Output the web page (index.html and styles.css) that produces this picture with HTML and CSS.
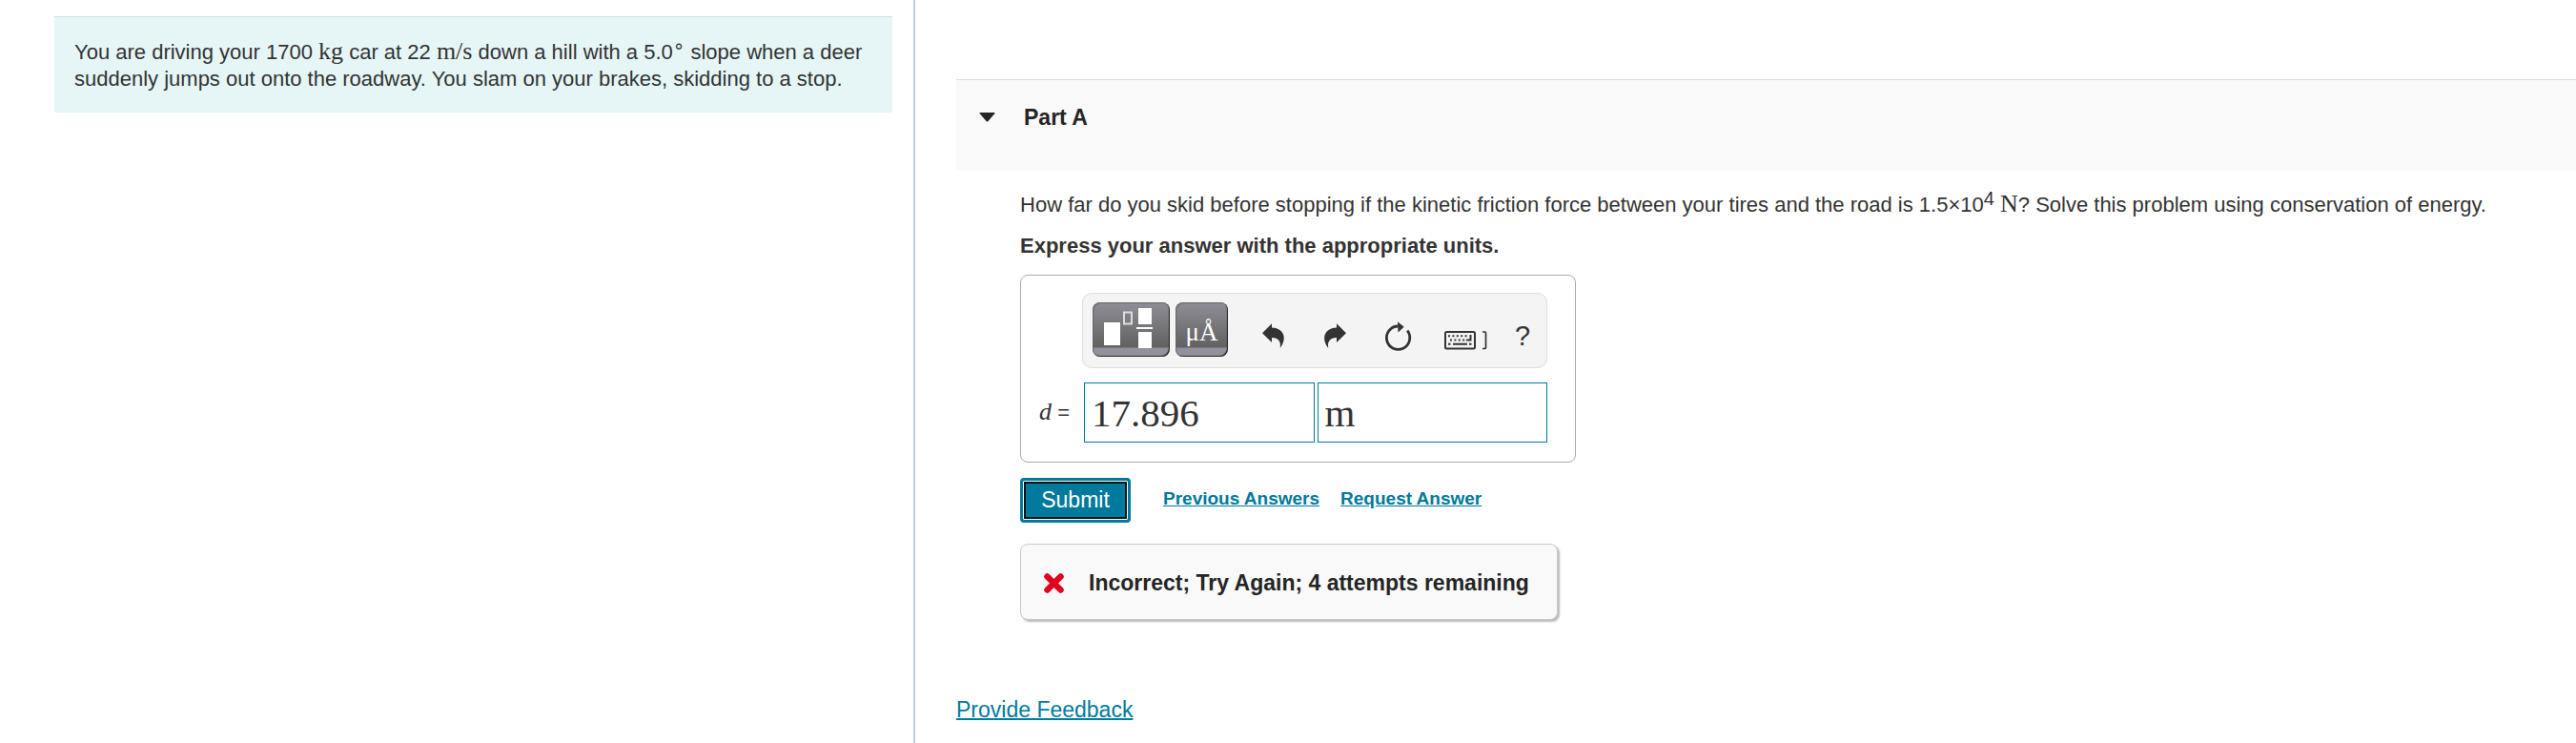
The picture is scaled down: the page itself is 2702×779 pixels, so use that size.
FILE: index.html
```html
<!DOCTYPE html>
<html lang="en">
<head>
    <meta charset="UTF-8">
    <title>Part A</title>
    <link rel="stylesheet" href="styles.css">
</head>
<body>
    <div class="layout">
        <aside class="intro-pane">
            <p class="problem-text">You are driving your 1700 <span class="math">kg</span> car at 22 <span class="math">m/s</span> down a hill with a 5.0<span class="degree">∘</span> slope when a deer suddenly jumps out onto the roadway. You slam on your brakes, skidding to a stop.</p>
        </aside>

        <main class="work-pane">
            <section class="part">
                <h2 class="part-header">
                    <button class="part-toggle" type="button" aria-expanded="true">
                        <svg class="caret" width="17" height="10" viewBox="0 0 17 10"><path d="M1 0h15q1 0 .4 1L9.500 9q-1 1-2 0L.6 1Q0 0 1 0z" fill="#252525"/></svg>
                        Part A
                    </button>
                </h2>

                <div class="part-body">
                    <p class="question">How far do you skid before stopping if the kinetic friction force between your tires and the road is 1.5×10<sup class="power">4</sup> <span class="math">N</span>? Solve this problem using conservation of energy.</p>
                    <p class="instructions">Express your answer with the appropriate units.</p>

                    <form>
                        <div class="answer-box">
                            <div class="toolbar">
                                <button class="tool-dark templates" type="button" aria-label="Templates">
                                    <svg width="81" height="57" viewBox="0 0 81 57">
                                        <rect x="12" y="21" width="17" height="24" fill="#fff"/>
                                        <rect x="33" y="10.500" width="8" height="12" fill="none" stroke="#ddd" stroke-width="2"/>
                                        <rect x="48" y="6" width="14" height="17" fill="#fff"/>
                                        <rect x="46" y="26" width="17" height="2" fill="#fff"/>
                                        <rect x="48" y="31" width="14" height="17" fill="#fff"/>
                                    </svg>
                                </button>
                                <button class="tool-dark symbols" type="button" aria-label="Symbols">μÅ</button>
                                <div class="tool-group">
                                    <button class="tool" type="button" aria-label="Undo">
                                        <svg width="66" height="57" viewBox="0 0 66 57"><path d="M22 32.300L32 22.300V26.500C44 27 49 37 40.700 48C42 41 39 37 32 37V42z" fill="#333"/></svg>
                                    </button>
                                    <button class="tool" type="button" aria-label="Redo">
                                        <svg width="66" height="57" viewBox="0 0 66 57"><path d="M44 32.300L34 22.300V26.500C22 27 17 37 25.300 48C24 41 27 37 34 37V42z" fill="#333"/></svg>
                                    </button>
                                    <button class="tool" type="button" aria-label="Reset">
                                        <svg width="66" height="57" viewBox="0 0 66 57">
                                            <path d="M42.200 29.700A12.200 12.200 0 1 1 32.500 25" fill="none" stroke="#333" stroke-width="2.800"/>
                                            <path d="M32 20.300L38.700 25.700L32.500 31.500z" fill="#333"/>
                                        </svg>
                                    </button>
                                    <button class="tool" type="button" aria-label="Keyboard shortcuts">
                                        <svg width="74" height="57" viewBox="0 0 74 57" fill="none" stroke="#333">
                                            <rect x="16" y="31" width="31" height="17.500" rx="1.500" stroke-width="2"/>
                                            <path d="M19 35.200h21" stroke-width="2" stroke-dasharray="2 2.400"/>
                                            <path d="M21 39.500h16" stroke-width="2" stroke-dasharray="2 2.400"/>
                                            <path d="M38 39.500h4.500V34" stroke-width="2"/>
                                            <path d="M19 43.800h2.500M24 43.800h15M41 43.800h2.500" stroke-width="2"/>
                                            <path d="M55 31h2.500q1 0 1 1v15.500q0 1-1 1H55" stroke-width="1.700"/>
                                        </svg>
                                    </button>
                                    <button class="tool help" type="button" aria-label="Help">?</button>
                                </div>
                            </div>
                            <div class="answer-row">
                                <label class="answer-label" for="value"><i class="variable">d</i> =</label>
                                <input class="answer-input" id="value" type="text" value="17.896">
                                <input class="answer-input" id="units" type="text" value="m" aria-label="Units">
                            </div>
                        </div>

                        <div class="actions">
                            <button class="submit" type="button">Submit</button>
                            <a class="action-link" href="#">Previous Answers</a>
                            <a class="action-link" href="#">Request Answer</a>
                        </div>
                    </form>

                    <div class="feedback" role="status">
                        <svg width="23" height="23" viewBox="0 0 23 23"><path d="M4.500 4.500L18.500 18.500M18.500 4.500L4.500 18.500" stroke="#e0001f" stroke-width="6.500" stroke-linecap="round"/></svg>
                        <span>Incorrect; Try Again; 4 attempts remaining</span>
                    </div>
                </div>
            </section>

            <a class="provide-feedback" href="#">Provide Feedback</a>
        </main>
    </div>
</body>
</html>
```

FILE: styles.css
```css
* {
    margin: 0;
    padding: 0;
    box-sizing: border-box;
}

body {
    font-family: "Liberation Sans", Arial, sans-serif;
    font-size: 22px;
    line-height: 28px;
    color: #333;
    background: #fff;
}

button,
input {
    font: inherit;
    color: inherit;
    background: none;
    border: none;
}

button {
    cursor: pointer;
}

svg {
    display: block;
}

a {
    color: #007a9c;
}

.layout {
    display: flex;
    min-height: 100vh;
}

/* left side */
.intro-pane {
    flex: 0 0 35.53%;
    padding: 17px 22px 17px 57px;
    border-right: 2px solid #bccddf;
}

.problem-text {
    padding: 23px 21px 21px;
    background: #e6f6f7;
    border-top: 1px solid #d3dfdf;
}

.math {
    font-family: "Liberation Serif", "Times New Roman", serif;
    font-size: 26px;
    line-height: 1;
}

.degree {
    font-family: "DejaVu Sans", sans-serif;
    font-size: 20px;
    line-height: 0;
    vertical-align: 7px;
}

/* right side */
.work-pane {
    flex: 1;
    min-width: 0;
    padding: 83px 0 20px 43px;
}

.part-header {
    height: 96px;
    padding: 25px 24px;
    background: #f9f9f9;
    border-top: 1px solid #ddd;
    font-size: 23px;
}

.part-toggle {
    display: flex;
    align-items: center;
    gap: 30px;
    color: #252525;
}

.part-body {
    padding: 22px 40px 0 67px;
}

.question {
    margin-bottom: 15px;
}

.power {
    font-size: 20px;
    line-height: 0;
    vertical-align: 7px;
}

.instructions {
    margin-bottom: 16px;
    font-weight: bold;
}

.answer-box {
    width: fit-content;
    padding: 18px 29px 20px 19px;
    border: 1px solid #aaa;
    border-radius: 8px;
}

.toolbar {
    display: flex;
    gap: 6px;
    margin-left: 45px;
    padding: 9px 0 11px 10px;
    background: #f4f4f4;
    border: 1px solid #ddd;
    border-radius: 10px;
}

.tool-dark {
    height: 57px;
    border-radius: 8px;
    background: linear-gradient(#8f8e97, #616161 47px, #93929c 48px);
    box-shadow: inset -1px -1px 1px #222, inset 1px 1px 1px #666;
    color: #fff;
}

.templates {
    width: 81px;
}

.symbols {
    width: 55px;
    padding-top: 4px;
    font-family: "Liberation Serif", "Times New Roman", serif;
    font-size: 27px;
}

.tool-group {
    display: flex;
    margin-left: 8px;
}

.help {
    width: 48px;
    padding: 12px 2px 0 0;
    font-size: 29px;
}

.answer-row {
    display: flex;
    align-items: center;
    gap: 3px;
    margin-top: 15px;
}

.answer-label {
    width: 44px;
}

.variable {
    font-family: "Liberation Serif", "Times New Roman", serif;
    font-size: 26px;
    line-height: 1;
}

.answer-input {
    flex: 1;
    width: 0;
    height: 63px;
    padding: 0 7px;
    border: 1px solid #007a9c;
    font-family: "Liberation Serif", "Times New Roman", serif;
    font-size: 41px;
}

.actions {
    display: flex;
    align-items: center;
    margin-top: 16px;
}

.submit {
    width: 116px;
    height: 47px;
    margin-right: 12px;
    padding-bottom: 2px;
    border: 3px solid #007a9c;
    border-radius: 4px;
    background: #007a9c;
    box-shadow: inset 0 0 0 1px #fff, inset 0 0 0 3px #111;
    color: #fff;
    font-size: 23px;
}

.action-link {
    margin-left: 22px;
    padding-bottom: 3px;
    font-size: 19px;
    font-weight: bold;
}

.feedback {
    display: flex;
    align-items: center;
    gap: 25px;
    width: fit-content;
    height: 80px;
    margin-top: 22px;
    padding: 2px 29px 0 23px;
    background: #f9f9f9;
    border: 1px solid #c8c8c8;
    border-radius: 8px;
    box-shadow: 2px 2px 2px #bbb;
    color: #252525;
    font-size: 23px;
    font-weight: bold;
}

.provide-feedback {
    display: inline-block;
    margin-top: 80px;
    font-size: 23px;
    text-decoration-thickness: 2px;
}
```
